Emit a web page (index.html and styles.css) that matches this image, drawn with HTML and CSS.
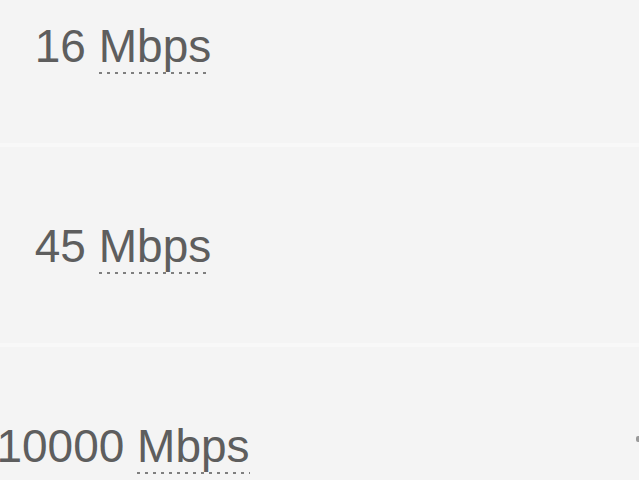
FILE: index.html
```
<!DOCTYPE html>
<html>
<head>
<meta charset="utf-8">
<link rel="stylesheet" href="styles.css">
</head>
<body>
<div class="table">
  <div class="row"><div class="cell"><span class="val">16 <abbr class="unit" title="Megabits per second">Mbps</abbr></span></div><div class="rest"></div></div>
  <div class="row"><div class="cell"><span class="val">45 <abbr class="unit" title="Megabits per second">Mbps</abbr></span></div><div class="rest"></div></div>
  <div class="row last"><div class="cell"><span class="val">10000 <abbr class="unit" title="Megabits per second">Mbps</abbr></span></div><div class="rest"><span class="edge"></span></div></div>
</div>
</body>
</html>
```
FILE: styles.css
```
html, body {
  margin: 0;
  padding: 0;
  background: #f4f4f4;
  overflow: hidden;
  width: 639px;
  height: 480px;
}
.table {
  margin-top: -53px;
  display: flex;
  flex-direction: column;
}
.row {
  display: flex;
  height: 196px;
  border-bottom: 4px solid #f8f8f8;
  box-sizing: content-box;
}
.row.last {
  height: auto;
  border-bottom: 0;
}
.cell {
  width: 246px;
  flex: none;
  display: flex;
  justify-content: center;
  align-items: flex-start;
  white-space: nowrap;
  font-family: "Liberation Sans", Arial, sans-serif;
  font-size: 46px;
  line-height: 46px;
  color: #5e5e5e;
  padding-top: 76px;
}
.val {
  flex: none;
}
.unit {
  text-decoration: none;
  padding-bottom: 2px;
  background-image: linear-gradient(to right, #7f7f7f 0 3px, transparent 3px 100%);
  background-size: 8px 2px;
  background-repeat: repeat-x;
  background-position: 0 100%;
}
.rest {
  flex: 1;
  display: flex;
  justify-content: flex-end;
  align-items: flex-start;
  padding-top: 89px;
}
.edge {
  width: 3px;
  height: 6px;
  background: #9a9a9a;
  border-radius: 2px 0 0 2px;
}
```
